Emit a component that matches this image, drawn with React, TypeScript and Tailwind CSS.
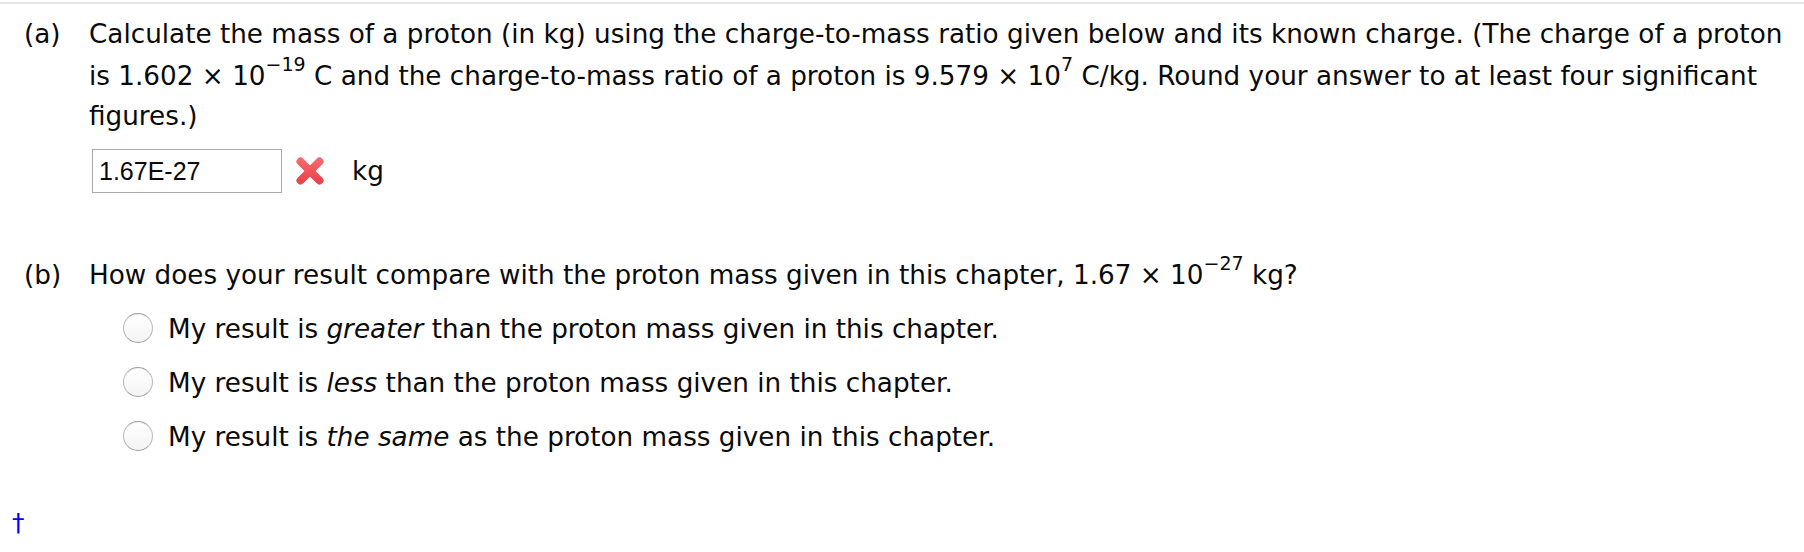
import React from 'react';

const font = "font-['DejaVu_Sans','Verdana',sans-serif]";

function Sup({ children }: { children: React.ReactNode }) {
  return <span className="relative -top-[14px] text-[19px] leading-none">{children}</span>;
}

function WrongMark() {
  return (
    <svg width="30" height="30" viewBox="0 0 30 30" className="shrink-0">
      <defs>
        <linearGradient id="xg" x1="0" y1="0" x2="0" y2="1">
          <stop offset="0" stopColor="#f5656c" />
          <stop offset="1" stopColor="#ea454c" />
        </linearGradient>
      </defs>
      <g stroke="url(#xg)" strokeWidth="8" strokeLinecap="round">
        <line x1="5.5" y1="5.5" x2="24.5" y2="24.5" />
        <line x1="24.5" y1="5.5" x2="5.5" y2="24.5" />
      </g>
    </svg>
  );
}

function Radio() {
  return (
    <span className="mt-[4px] block h-[30px] w-[30px] shrink-0 rounded-full border-[1.5px] border-[#b8b8b8] border-t-[#a0a0a0] border-b-[#9a9a9a] bg-gradient-to-b from-white to-[#f4f4f4] shadow-[inset_0_1px_1px_rgba(0,0,0,0.06)]" />
  );
}

const choices: { before: string; em: string; after: string }[] = [
  { before: 'My result is ', em: 'greater', after: ' than the proton mass given in this chapter.' },
  { before: 'My result is ', em: 'less', after: ' than the proton mass given in this chapter.' },
  { before: 'My result is ', em: 'the same', after: ' as the proton mass given in this chapter.' },
];

export default function App() {
  return (
    <div className={`min-h-[552px] bg-white text-[#0a0a0a] ${font}`}>
      <div className="pt-[2px]">
        <div className="h-[2px] bg-[#e6e6e6]" />
      </div>

      <div className="pl-[24px] pt-[10px] text-[26.25px] leading-[41px]">
        {/* part (a) */}
        <div className="flex">
          <div className="w-[65px] shrink-0">(a)</div>
          <div className="flex-1">
            <p>
              Calculate the mass of a proton (in kg) using the charge-to-mass ratio given below and its known charge. (The charge of a proton
              <br />
              <span className="relative top-[1px]">
                is 1.602 × 10<Sup>−19</Sup> C and the charge-to-mass ratio of a proton is 9.579 × 10<Sup>7</Sup> C/kg. Round your answer to at least four significant
              </span>
              <br />
              figures.)
            </p>
            <div className="mt-[12px] ml-[3px] flex items-center">
              <div className="flex h-[44px] w-[190px] items-center border border-[#a9a9a9] px-[6px] font-['Liberation_Sans','Arial',sans-serif] text-[25px] leading-none">
                1.67E-27
              </div>
              <div className="ml-[13px]">
                <WrongMark />
              </div>
              <span className="ml-[27px]">kg</span>
            </div>
          </div>
        </div>

        {/* part (b) */}
        <div className="mt-[62px] flex">
          <div className="w-[65px] shrink-0">(b)</div>
          <div className="flex-1">
            <p>
              How does your result compare with the proton mass given in this chapter, 1.67 × 10<Sup>−27</Sup> kg?
            </p>
            <div className="mt-[13px] flex flex-col gap-[13px] pl-[34px]">
              {choices.map((c) => (
                <label key={c.em} className="flex items-start gap-[15px]">
                  <Radio />
                  <span>
                    {c.before}
                    <em>{c.em}</em>
                    {c.after}
                  </span>
                </label>
              ))}
            </div>
          </div>
        </div>
      </div>

      <div className="mt-[44px] pl-[12px] text-[25px] leading-[41px] text-[#0000ff]">†</div>
    </div>
  );
}
